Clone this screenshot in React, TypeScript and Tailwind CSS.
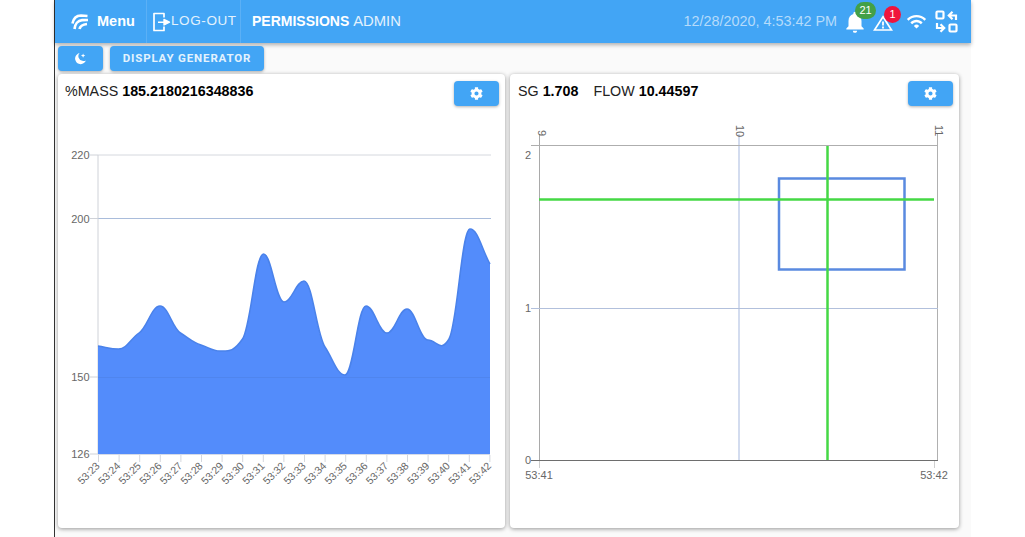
import React from "react";
import { FaCog } from "react-icons/fa";
import { MdNotifications, MdWifi } from "react-icons/md";

const sans = { fontFamily: '"Liberation Sans", Arial, sans-serif' };

const pts: [number, number][] = [
  [98, 346], [118.6, 349], [139, 333], [160, 306], [180.5, 333], [201, 345], [220, 351],
  [242.5, 339], [263.5, 254], [284, 302], [304, 281], [325, 347], [345, 375], [366, 306],
  [387, 333], [407, 309], [428, 340], [449, 339], [470, 229], [490, 264],
];

function curve(p: [number, number][]) {
  const n = p.length;
  const m: number[] = [];
  for (let i = 0; i < n; i++) {
    if (i === 0 || i === n - 1) {
      const j = i === 0 ? 0 : i - 1;
      m.push((p[j + 1][1] - p[j][1]) / (p[j + 1][0] - p[j][0]));
    } else {
      const a = p[i][1] - p[i - 1][1];
      const b = p[i + 1][1] - p[i][1];
      m.push(a * b <= 0 ? 0 : ((p[i + 1][1] - p[i - 1][1]) / (p[i + 1][0] - p[i - 1][0])) * 0.65);
    }
  }
  let d = `M${p[0][0]},${p[0][1]}`;
  for (let i = 0; i < n - 1; i++) {
    const h = (p[i + 1][0] - p[i][0]) / 2.5;
    d += ` C${p[i][0] + h},${p[i][1] + m[i] * h} ${p[i + 1][0] - h},${p[i + 1][1] - m[i + 1] * h} ${p[i + 1][0]},${p[i + 1][1]}`;
  }
  return d;
}

const line = curve(pts);
const times = Array.from({ length: 20 }, (_, i) => `53:${23 + i}`);

function AreaChart() {
  // svg origin is page (58, 110)
  return (
    <svg width="447" height="418" viewBox="58 110 447 418" className="block">
      <g strokeWidth="1">
        <line x1="98" x2="491" y1="155" y2="155" stroke="#d5d8de" />
        <line x1="98" x2="491" y1="218.500" y2="218.500" stroke="#a9bcdb" />
        <line x1="98" x2="98" y1="155" y2="454" stroke="#cfd2d8" />
        {[155, 218.5, 377, 454].map((y) => (
          <line key={y} x1="90" x2="98" y1={y} y2={y} stroke="#cfd2d8" />
        ))}
      </g>
      <path d={`${line} L490,454 L98,454 Z`} fill="#538cfb" />
      <path d={line} fill="none" stroke="#4a82ea" strokeWidth="1.5" />
      <line x1="98" x2="490" y1="377.500" y2="377.500" stroke="#4f85ee" />
      <line x1="98" x2="490" y1="454.500" y2="454.500" stroke="#d5dbe8" />
      <g fill="#666" fontSize="11" textAnchor="end" className="opacity-[0.99]" style={sans}>
        <text x="89.500" y="159">220</text>
        <text x="89.500" y="222.500">200</text>
        <text x="89.500" y="381">150</text>
        <text x="89.500" y="457.500">126</text>
      </g>
      <g className="opacity-[0.99]">
        {times.map((t, i) => {
          const x = 98.5 + i * 20.6;
          return (
            <g key={t}>
              <line x1={x} x2={x} y1="455" y2="462" stroke="#d5d8de" />
              <text x={x + 2} y="466.500" fontSize="10.500" fill="#666" textAnchor="end" transform={`rotate(-45 ${x + 2} 466.500)`} style={sans}>
                {t}
              </text>
            </g>
          );
        })}
      </g>
    </svg>
  );
}

function ScatterChart() {
  // svg origin is page (510, 110)
  return (
    <svg width="449" height="418" viewBox="510 110 449 418" className="block">
      <line x1="539.500" x2="539.500" y1="134" y2="461" stroke="#a9a9a9" />
      <line x1="739" x2="739" y1="134" y2="460" stroke="#bccae6" strokeWidth="1.300" />
      <line x1="937.500" x2="937.500" y1="134" y2="460" stroke="#b0b0b0" />
      <line x1="531" x2="938" y1="145.500" y2="145.500" stroke="#aeaeae" strokeWidth="1.200" />
      <line x1="531" x2="938" y1="308.500" y2="308.500" stroke="#b2c0dc" />
      <line x1="531" x2="938" y1="460.500" y2="460.500" stroke="#6e6e6e" />
      <line x1="539.500" x2="539.500" y1="461" y2="468" stroke="#cfcfcf" />
      <line x1="934.500" x2="934.500" y1="461" y2="468" stroke="#cfcfcf" />
      <rect x="779" y="178.500" width="125.500" height="91" fill="none" stroke="#5a8ae0" strokeWidth="2.500" />
      <line x1="539" x2="934" y1="199.500" y2="199.500" stroke="#45d845" strokeWidth="2.500" />
      <line x1="827.500" x2="827.500" y1="146" y2="460" stroke="#45d845" strokeWidth="2.500" />
      <g fill="#666" fontSize="11" className="opacity-[0.99]" style={sans}>
        <text x="531" y="158.500" textAnchor="end">2</text>
        <text x="531" y="311.500" textAnchor="end">1</text>
        <text x="531" y="464" textAnchor="end">0</text>
        <text x="539" y="479" textAnchor="middle">53:41</text>
        <text x="934" y="479" textAnchor="middle">53:42</text>
        <text transform="rotate(90 538 130)" x="538" y="130" textAnchor="start">9</text>
        <text transform="rotate(90 736 125)" x="736" y="125" textAnchor="start">10</text>
        <text transform="rotate(90 935 125)" x="935" y="125" textAnchor="start">11</text>
      </g>
    </svg>
  );
}

function GearButton() {
  return (
    <button className="flex h-[25px] w-[45px] items-center justify-center rounded bg-[#42a5f5] text-white shadow-[0_1px_3px_rgba(0,0,0,0.3)]">
      <FaCog size={13} />
    </button>
  );
}

function Logo() {
  return (
    <svg width="18" height="16" viewBox="0 0 18 16" fill="none" stroke="white" strokeWidth="2.700">
      <path d="M1.500 9.500C2.500 4 6 1.500 10 1.500L16.500 2" />
      <path d="M3.500 15C4 10 7 6.500 11 6.200L17 6" />
      <path d="M8.500 15C9 12.500 11.500 10.500 16 10" />
    </svg>
  );
}

function LogoutIcon() {
  return (
    <svg width="20" height="20" viewBox="0 0 20 20" fill="none" stroke="white" strokeWidth="1.700">
      <path d="M12 5.500V1.500H2V18.500H12V14.500" strokeLinejoin="round" />
      <path d="M6 10.200H12V7.500L17.500 10.200L12 13V10.200" fill="white" strokeLinejoin="round" strokeWidth="1.400" />
    </svg>
  );
}

function MoonIcon() {
  return (
    <svg width="13" height="13" viewBox="0 0 14 14" fill="white">
      <path d="M6 1.200A6 6 0 1 0 12.800 9.200 5 5 0 0 1 9 9.500 5 5 0 0 1 6 1.200Z" />
      <path d="M9.800 1.500l.7 1.700 1.700.7-1.700.7-.7 1.700-.7-1.700-1.700-.7 1.700-.7Z" />
    </svg>
  );
}

function WarningIcon() {
  return (
    <svg width="20" height="16" viewBox="0 0 20 16" fill="none" stroke="white">
      <path d="M10 1.800L18.500 15H1.500Z" strokeWidth="1.700" />
      <path d="M10 6.500V10.500M10 11.500V13.500" strokeWidth="1.800" />
    </svg>
  );
}

function SwapIcon() {
  return (
    <svg width="23" height="23" viewBox="0 0 23 23" fill="none" stroke="white" strokeWidth="2.200">
      <rect x="1.500" y="1.500" width="7" height="7" rx="1" />
      <rect x="14.500" y="14.500" width="7" height="7" rx="1" />
      <path d="M21 10V5.500H14M17.500 1.800L13.800 5.500L17.500 9.200" />
      <path d="M2 13V18H9M5.500 14.300L9.200 18L5.500 21.700" />
    </svg>
  );
}

export default function App() {
  return (
    <div className="h-[537px] w-[1025px] overflow-hidden bg-white" style={sans}>
      <div className="ml-[54px] flex h-full w-[917px] flex-col border-l border-[#333] bg-[#fafafa]">
        <header className="flex h-[43px] shrink-0 items-center bg-[#42a5f5] text-white shadow-[0_2px_4px_rgba(0,0,0,0.3)]">
          <div className="flex h-full w-[92px] items-center gap-[8px] border-r border-[#5bb0f6] pl-[16px]">
            <Logo />
            <span className="text-[14.500px] font-bold">Menu</span>
          </div>
          <div className="flex h-full w-[94px] items-center border-r border-[#5bb0f6] pl-[5px]">
            <LogoutIcon />
            <span className="ml-[-1px] text-[13.500px] tracking-[0.6px] text-[#e3f2fd]">LOG-OUT</span>
          </div>
          <div className="ml-[11px] text-[14px]">
            <span className="font-bold">PERMISSIONS</span> <span className="text-[14.800px] text-[#e3f2fd]">ADMIN</span>
          </div>
          <div className="ml-auto flex items-center">
            <span className="text-[14.400px] text-[#b5dbfb]">12/28/2020, 4:53:42 PM</span>
            <div className="relative ml-[5px] mt-[1px]">
              <MdNotifications size={26} />
              <span className="absolute left-[13px] top-[-7px] flex h-[17px] w-[21px] items-center justify-center rounded-full bg-[#43a047] text-[11px]">21</span>
            </div>
            <div className="relative ml-[5px] mt-[2px]">
              <WarningIcon />
              <span className="absolute left-[11px] top-[-9px] flex h-[17px] w-[17px] items-center justify-center rounded-full bg-[#f0143c] text-[11px]">1</span>
            </div>
            <MdWifi size={21} className="ml-[13px]" />
            <div className="ml-[8px] mr-[13px]">
              <SwapIcon />
            </div>
          </div>
        </header>
        <div className="flex h-[31px] shrink-0 items-start gap-[7px] pl-[3px] pt-[3px]">
          <button className="flex h-[25px] w-[45px] items-center justify-center rounded bg-[#42a5f5] shadow-[0_1px_3px_rgba(0,0,0,0.3)]">
            <MoonIcon />
          </button>
          <button className="h-[25px] w-[154px] rounded bg-[#42a5f5] text-[11.500px] font-bold tracking-[0.85px] text-[#e3f2fd] shadow-[0_1px_3px_rgba(0,0,0,0.3)]" style={{ fontFamily: "Roboto, sans-serif" }}>
            DISPLAY GENERATOR
          </button>
        </div>
        <div className="flex gap-[5px] pl-[3px]">
          <section className="h-[454px] w-[447px] rounded bg-white shadow-[0_1px_4px_rgba(0,0,0,0.4)]">
            <div className="flex h-[36px] items-start justify-between pl-[7px] pr-[6px] pt-[7px]">
              <div className="text-[14.300px] text-[#222]">
                %MASS <b className="text-black">185.2180216348836</b>
              </div>
              <GearButton />
            </div>
            <AreaChart />
          </section>
          <section className="h-[454px] w-[449px] rounded bg-white shadow-[0_1px_4px_rgba(0,0,0,0.4)]">
            <div className="flex h-[36px] items-start justify-between pl-[8px] pr-[6px] pt-[7px]">
              <div className="text-[14.300px] text-[#222]">
                SG <b className="text-black">1.708</b>
                <span className="ml-[15px]">FLOW</span> <b className="text-black">10.44597</b>
              </div>
              <GearButton />
            </div>
            <ScatterChart />
          </section>
        </div>
      </div>
    </div>
  );
}
